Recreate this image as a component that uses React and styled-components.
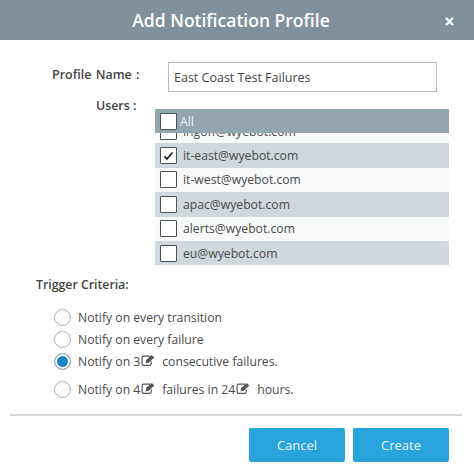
import React from 'react';
import styled, { createGlobalStyle } from 'styled-components';

const GlobalStyle = createGlobalStyle`
	html, body {
		margin: 0;
		padding: 0;
		background: #fff;
	}
	* {
		box-sizing: border-box;
	}
`;

const Modal = styled.div`
	width: 474px;
	height: 473px;
	overflow: hidden;
	font-family: 'Open Sans', sans-serif;
	color: #444;
	background: #fff;
`;

const Header = styled.header`
	display: flex;
	align-items: center;
	justify-content: center;
	position: relative;
	height: 40px;
	padding-right: 12px;
	background: #7f929b;
	color: #fff;
`;

const Title = styled.h1`
	margin: 0;
	font-size: 17.5px;
	font-weight: 600;
`;

const Close = styled.button`
	position: absolute;
	right: 18px;
	top: 13px;
	width: 14px;
	height: 16px;
	padding: 0;
	display: flex;
	align-items: center;
	justify-content: center;
	border: 0;
	background: none;
`;

const NameRow = styled.div`
	display: flex;
	align-items: flex-start;
	padding: 22px 0 0 52px;
`;

const NameLabel = styled.label`
	width: 116px;
	font-size: 12.5px;
	font-weight: 600;
	line-height: 18px;
	margin-top: 4px;
	word-spacing: 1px;
`;

const NameInput = styled.input`
	width: 269px;
	height: 30px;
	padding: 0 5px;
	border: 1px solid #b9bdbf;
	font-family: inherit;
	font-size: 12.5px;
	font-weight: 500;
	color: #444;
	outline: none;
`;

const UsersRow = styled.div`
	display: flex;
	height: 182px;
	padding-left: 96px;
`;

const UsersLabel = styled.div`
	width: 59px;
	margin-top: 5px;
	font-size: 12.4px;
	font-weight: 600;
	line-height: 18px;
`;

const UserBox = styled.div`
	position: relative;
	width: 294px;
	height: 156px;
	margin-top: 17px;
	padding-top: 10px;
	overflow: hidden;
`;

const AllRow = styled.div`
	position: absolute;
	left: 0;
	top: 0;
	width: 100%;
	height: 24px;
	display: flex;
	align-items: center;
	padding-left: 5px;
	background: #93a5af;
	color: #eef2f4;
	font-size: 12.2px;
`;

const UserRow = styled.div`
	display: flex;
	align-items: center;
	height: 24.4px;
	padding-left: 5px;
	background: ${p => (p.$shaded ? '#cfd8dc' : '#f8f9f9')};
	font-size: 12.2px;
	color: #4a4a4a;
`;

const Check = styled.span`
	display: flex;
	align-items: center;
	justify-content: center;
	flex: none;
	width: 17px;
	height: 17px;
	margin-right: ${p => (p.$tight ? '3px' : '6px')};
	border: 1.5px solid #4d5154;
	border-radius: 1px;
	background: #fff;
`;

const Criteria = styled.section`
	padding: 0 0 0 36px;
`;

const CriteriaLabel = styled.div`
	font-size: 12.3px;
	font-weight: 600;
	line-height: 18px;
	margin-top: 2px;
	margin-bottom: 12px;
`;

const Option = styled.div`
	display: flex;
	align-items: center;
	height: 22px;
	margin-left: 18px;
	margin-top: ${p => p.$gap || 0}px;
	font-size: 12.2px;
	color: #4a4a4a;
	white-space: pre;
`;

const Radio = styled.span`
	flex: none;
	width: 17px;
	height: 17px;
	margin-right: 7px;
	border: 1px solid #a9adaf;
	border-radius: 50%;
	background: ${p => (p.$on ? '#1a87c4' : '#fff')};
	box-shadow: ${p => (p.$on ? 'inset 0 0 0 2px #fff' : 'none')};
`;

const Footer = styled.footer`
	margin: 14px 12px 0 10px;
	padding: 12px 13px 0 0;
	border-top: 2px solid #d8d8d8;
	display: flex;
	justify-content: flex-end;
	gap: 8px;
`;

const ActionButton = styled.button`
	width: 96px;
	height: 34px;
	border: 0;
	border-radius: 2px;
	background: #29a4dd;
	color: #eaf6fc;
	font-family: inherit;
	font-size: 13px;
`;

const EditSvg = styled.svg`
	flex: none;
	margin: 0 7px 2px 1px;
`;

const EditIcon = () => (
	<EditSvg width="14" height="13" viewBox="0 0 13 12">
		<path d="M8.5 2H2.5Q1 2 1 3.500V9Q1 10.500 2.500 10.500H8Q9.500 10.500 9.500 9V7" fill="none" stroke="#555" strokeWidth="1.100" />
		<path d="M4.300 8.500L4.800 5.600L10 .8L12.400 3.100L7.200 8Z" fill="#555" />
	</EditSvg>
);

const users = [
	{ email: 'ingoff@wyebot.com', shaded: false },
	{ email: 'it-east@wyebot.com', shaded: true, checked: true },
	{ email: 'it-west@wyebot.com', shaded: false },
	{ email: 'apac@wyebot.com', shaded: true },
	{ email: 'alerts@wyebot.com', shaded: false },
	{ email: 'eu@wyebot.com', shaded: true }
];

const App = () => (
	<Modal>
		<GlobalStyle />
		<Header>
			<Title>Add Notification Profile</Title>
			<Close aria-label="close">
				<svg width="9" height="9" viewBox="0 0 9 9">
					<path d="M1 1L8 8M8 1L1 8" stroke="#fff" strokeWidth="2.200" />
				</svg>
			</Close>
		</Header>
		<NameRow>
			<NameLabel>Profile Name :</NameLabel>
			<NameInput defaultValue="East Coast Test Failures" />
		</NameRow>
		<UsersRow>
			<UsersLabel>Users :</UsersLabel>
			<UserBox>
				{users.map(user => (
					<UserRow key={user.email} $shaded={user.shaded}>
						<Check>
							{user.checked ? (
								<svg width="13" height="12" viewBox="0 0 13 12">
									<path d="M2.500 6.500L5 9L10.500 2.500" fill="none" stroke="#222" strokeWidth="1.800" />
								</svg>
							) : null}
						</Check>
						{user.email}
					</UserRow>
				))}
				<AllRow>
					<Check $tight />
					All
				</AllRow>
			</UserBox>
		</UsersRow>
		<Criteria>
			<CriteriaLabel>Trigger Criteria:</CriteriaLabel>
			<Option>
				<Radio />
				Notify on every transition
			</Option>
			<Option>
				<Radio />
				Notify on every failure
			</Option>
			<Option>
				<Radio $on />
				Notify on 3<EditIcon />consecutive failures.
			</Option>
			<Option $gap={6}>
				<Radio />
				Notify on 4<EditIcon />failures in 24<EditIcon />hours.
			</Option>
		</Criteria>
		<Footer>
			<ActionButton>Cancel</ActionButton>
			<ActionButton>Create</ActionButton>
		</Footer>
	</Modal>
);

export default App;
